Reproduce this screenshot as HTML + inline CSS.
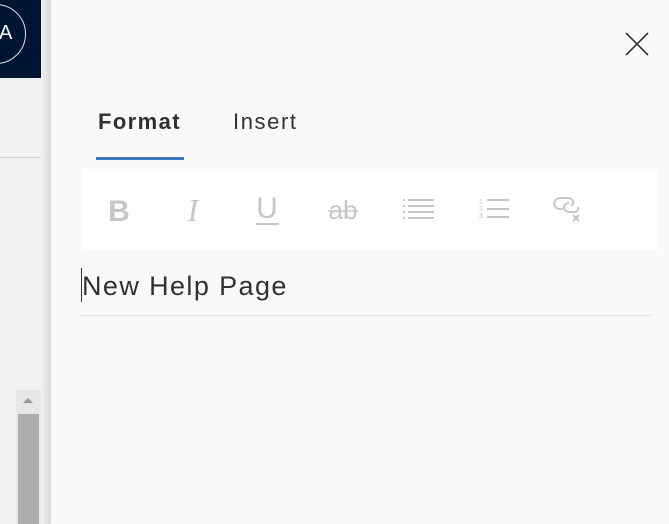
<!DOCTYPE html>
<html><head><style>
body{margin:0;width:669px;height:524px;overflow:hidden;background:#faf9f8;font-family:"Liberation Sans",sans-serif;position:relative}
.a{position:absolute}
</style></head><body>
<div class="a" style="left:0;top:0;width:41px;height:524px;background:#f3f2f1"></div>
<div class="a" style="left:0;top:0;width:41px;height:78px;background:#001433"></div>
<div class="a" style="left:-34px;top:4px;width:58px;height:58px;border:1.5px solid #e0e0e0;border-radius:50%"></div>
<div class="a" style="left:-1px;top:22px;color:#fff;font-size:20px">A</div>
<div class="a" style="left:0;top:157px;width:41px;height:1px;background:#d0d0d0"></div>
<div class="a" style="left:16px;top:390px;width:25px;height:134px;background:#e6e6e6"></div>
<div class="a" style="left:18px;top:414px;width:21px;height:110px;background:#adadad"></div>
<div class="a" style="left:23px;top:398px;width:0;height:0;border-left:5px solid transparent;border-right:5px solid transparent;border-bottom:5px solid #999"></div>
<div class="a" style="left:41px;top:0;width:10px;height:524px;background:linear-gradient(to right,#f3f2f1,#d9d9d9)"></div>
<svg class="a" style="left:624px;top:31px" width="26" height="26"><path d="M2 2L24 24M24 2L2 24" stroke="#333" stroke-width="1.6"/></svg>
<div class="a" style="left:98px;top:109px;font-size:22px;font-weight:bold;color:#323130;letter-spacing:1.4px">Format</div>
<div class="a" style="left:233px;top:109px;font-size:22px;color:#323130;letter-spacing:1.6px">Insert</div>
<div class="a" style="left:96px;top:157px;width:88px;height:3px;background:#3a79bf"></div>
<div class="a" style="left:81px;top:169px;width:577px;height:82px;background:#fff"></div>
<svg class="a" style="left:81px;top:169px" width="577" height="82" fill="none" stroke="#c8c6c4">
<text x="38" y="52" text-anchor="middle" font-family="Liberation Sans" font-weight="bold" font-size="30" fill="#c8c6c4" stroke="none">B</text>
<text x="112" y="52" text-anchor="middle" font-family="Liberation Serif" font-style="italic" font-size="32" fill="#c8c6c4" stroke="none">I</text>
<text x="186" y="49" text-anchor="middle" font-family="Liberation Sans" font-size="30" fill="#c8c6c4" stroke="none">U</text>
<path d="M175 55H198" stroke-width="2"/>
<text x="262" y="50" text-anchor="middle" font-family="Liberation Sans" font-size="26" fill="#c8c6c4" stroke="none">ab</text>
<path d="M247 42H277" stroke-width="1.5"/>
<path d="M322 31h2M322 37h2M322 43h2M322 49h2M327 31h26M327 37h26M327 43h26M327 49h26" stroke-width="2"/>
<text x="398" y="35" font-size="7" fill="#c8c6c4" stroke="none">1</text>
<text x="398" y="42" font-size="7" fill="#c8c6c4" stroke="none">2</text>
<text x="398" y="49" font-size="7" fill="#c8c6c4" stroke="none">3</text>
<path d="M406 31h22M406 40h22M406 48h22" stroke-width="2"/>
<path d="M482 40c-11 2-12-11-2-11h7c5 0 7 5 3 8M488 34c-6 0-7 8 0 9h5c4 0 5-3 4-5M492 46l6 6M498 46l-6 6" stroke-width="2"/>
</svg>
<div class="a" style="left:82px;top:271px;font-size:27px;color:#323130;letter-spacing:1.4px">New Help Page</div>
<div class="a" style="left:81px;top:268px;width:1px;height:34px;background:#333"></div>
<div class="a" style="left:81px;top:315px;width:570px;height:1px;background:#e1dfdd"></div>
</body></html>
